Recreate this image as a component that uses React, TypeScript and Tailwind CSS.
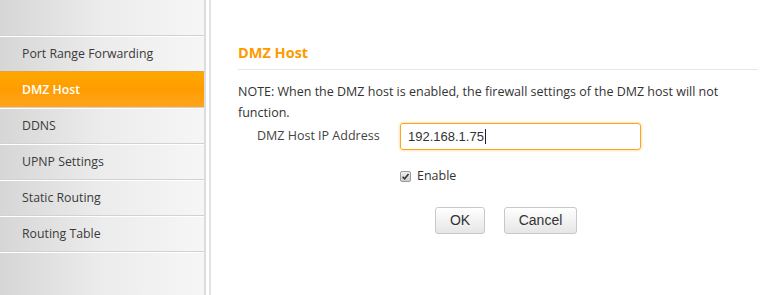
const items = [
  'Port Range Forwarding',
  'DMZ Host',
  'DDNS',
  'UPNP Settings',
  'Static Routing',
  'Routing Table',
];

function SideItem({ label, active }: { label: string; active?: boolean }) {
  if (active) {
    return (
      <div className="flex h-[36px] items-center border-t border-[#e9a233] bg-gradient-to-b from-[#ffa800] via-[#ff9c00] to-[#ffa51a] pl-[22px] pt-px text-[12.3px] font-semibold text-white">
        {label}
      </div>
    );
  }
  return (
    <div className="flex h-[36px] items-center border-t border-[#d2d2d2] pl-[22px] pt-px text-[12.3px] text-[#3a3a3a] shadow-[inset_0_1px_0_#ffffff]">
      {label}
    </div>
  );
}

export default function App() {
  return (
    <div className="flex h-[295px] w-[780px] overflow-hidden bg-white font-['Open_Sans',sans-serif]">
      <aside className="flex w-[206px] shrink-0 flex-col border-r-2 border-[#dcdcdc] bg-gradient-to-r from-[#d6d6d6] via-[#ececec] to-[#f6f6f6]">
        <div className="h-[35px]" />
        {items.map((label) => (
          <SideItem key={label} label={label} active={label === 'DMZ Host'} />
        ))}
        <div className="flex-1 border-t border-[#d2d2d2] shadow-[inset_0_1px_0_#ffffff]" />
      </aside>
      <div className="w-[3px] shrink-0" />
      <div className="w-[2px] shrink-0 bg-[#e2e2e2]" />

      <main className="flex-1 pl-[27px] pr-[22px]">
        <h2 className="mt-[43px] border-b border-[#e6e6e6] pb-[7px] text-[14.5px] font-bold leading-[19px] text-[#ff9a00]">
          DMZ Host
        </h2>
        <p className="mt-[11px] w-[500px] text-[12.5px] leading-[21px] text-[#333]">
          NOTE: When the DMZ host is enabled, the firewall settings of the DMZ host will not function.
        </p>

        <div className="flex items-center">
          <label className="w-[162px] pl-[19px] text-[12.5px] text-[#444]">DMZ Host IP Address</label>
          <div className="flex h-[27px] w-[241px] items-center rounded-[3px] border border-[#f5a623] pl-[7px] font-['Liberation_Sans',sans-serif] text-[13px] text-[#333] shadow-[0_0_3px_#ffc46b]">
            192.168.1.75
            <span className="ml-px h-[15px] w-px bg-[#222]" />
          </div>
        </div>

        <div className="ml-[162px] mt-[17px] flex items-center gap-[6px]">
          <span className="flex h-[11px] w-[11px] items-center justify-center rounded-[2px] border border-[#9a9a9a] bg-gradient-to-b from-[#eee] to-[#cfcfcf]">
            <svg viewBox="0 0 10 10" className="h-[9px] w-[9px]">
              <path d="M1.8 5.2 L4 7.6 L8.4 2.2" fill="none" stroke="#333" strokeWidth="1.7" />
            </svg>
          </span>
          <span className="text-[12.5px] text-[#333]">Enable</span>
        </div>

        <div className="ml-[197px] mt-[21px] flex gap-[19px] font-['Liberation_Sans',sans-serif] text-[14px] text-[#333]">
          <button className="h-[27px] w-[50px] rounded-[3px] border border-[#c8c8c8] bg-gradient-to-b from-[#ffffff] to-[#e6e6e6]">
            OK
          </button>
          <button className="h-[27px] w-[73px] rounded-[3px] border border-[#c8c8c8] bg-gradient-to-b from-[#ffffff] to-[#e6e6e6]">
            Cancel
          </button>
        </div>
      </main>
    </div>
  );
}
